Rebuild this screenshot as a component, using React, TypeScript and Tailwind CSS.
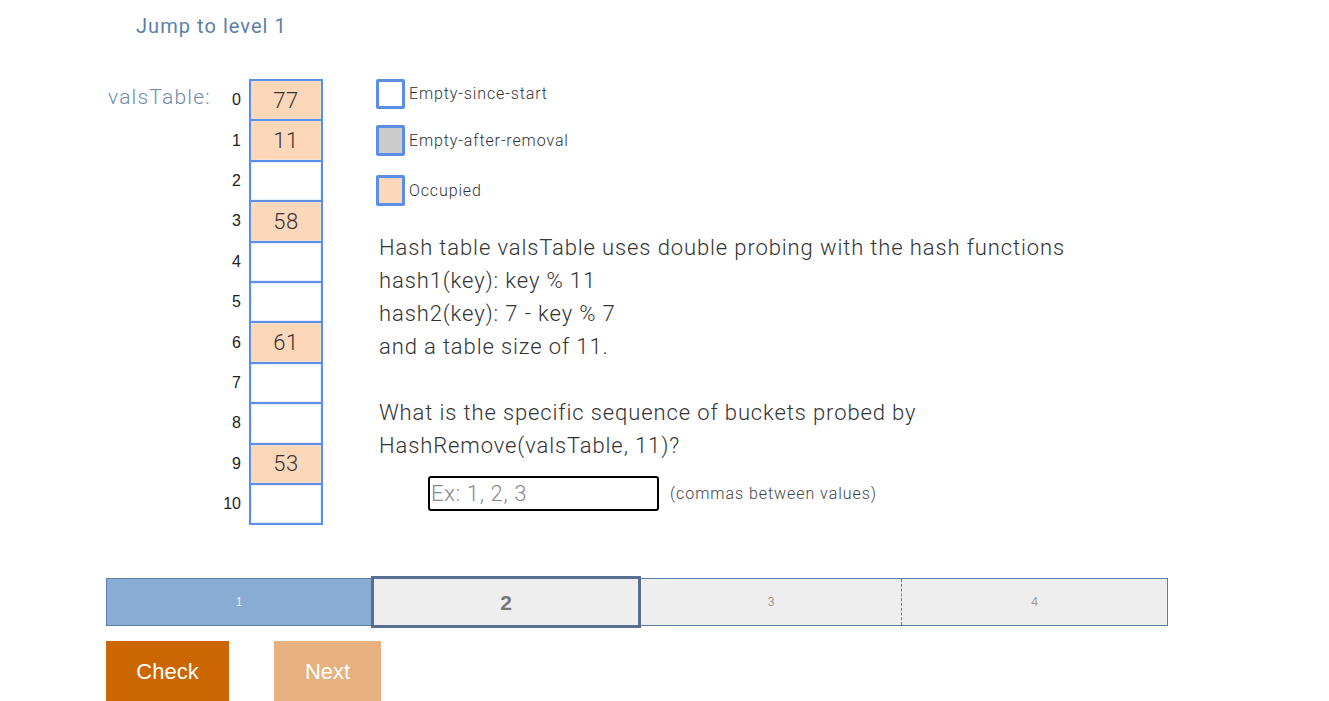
import React from "react";

const rows: (number | null)[] = [77, 11, null, 58, null, null, 61, null, null, 53, null];

export default function App() {
  return (
    <div className="min-h-[701px] bg-white pl-[106px] pt-[14px]" style={{ fontFamily: "Roboto, 'Liberation Sans', sans-serif" }}>
      <div className="ml-[30px] text-[20px] leading-[24px] tracking-[1.05px] text-[#5d7fa3]">Jump to level 1</div>

      <div className="mt-[41px] flex">
        {/* left: table */}
        <div className="flex">
          <div className="ml-[2px] w-[106px] pt-[6px] text-[21px] font-light leading-[24px] tracking-[1.2px] text-[#6f8aa8]">valsTable:</div>
          <div className="flex flex-col">
            {rows.map((v, i) => (
              <div key={i} className={"flex items-center " + (i > 0 ? "-mt-[2px]" : "")}>
                <div className="w-[28px] pr-[1px] text-right text-[16px] text-[#222]" style={{ fontFamily: "'Liberation Sans', Arial, sans-serif" }}>
                  {i}
                </div>
                <div className="ml-[7px] h-[42.4px] w-[74px] border-2 border-[#5b8ee6]">
                  <div
                    className={
                      "flex h-full w-full items-center justify-center border text-[22px] font-light tracking-[0.5px] text-[#333] " +
                      (v !== null ? "border-[#f0e0d0] bg-[#fdd7b9]" : "border-[#e8eefa] bg-white")
                    }
                  >
                    {v}
                  </div>
                </div>
              </div>
            ))}
          </div>
        </div>

        {/* right */}
        <div className="ml-[53px] flex flex-col">
          <div className="flex items-center">
            <div className="h-[30px] w-[29px] rounded-[2px] border-[3px] border-[#5b8ee6] bg-white" />
            <span className="ml-[4px] text-[16px] font-light tracking-[0.88px] text-[#333]">Empty-since-start</span>
          </div>
          <div className="mt-[16px] flex items-center">
            <div className="h-[31px] w-[29px] rounded-[2px] border-[3px] border-[#5b8ee6] bg-[#cccccc]" />
            <span className="ml-[4px] text-[16px] font-light tracking-[0.88px] text-[#333]">Empty-after-removal</span>
          </div>
          <div className="mt-[19px] flex items-center">
            <div className="h-[31px] w-[29px] rounded-[2px] border-[3px] border-[#5b8ee6] bg-[#fdd7b9]" />
            <span className="ml-[4px] text-[16px] font-light tracking-[0.88px] text-[#333]">Occupied</span>
          </div>

          <div className="ml-[3px] mt-[25px] text-[22px] font-light leading-[33px] tracking-[0.88px] text-[#333]">
            <div>Hash table valsTable uses double probing with the hash functions</div>
            <div>hash1(key): key % 11</div>
            <div>hash2(key): 7 - key % 7</div>
            <div>and a table size of 11.</div>
            <div className="h-[33px]" />
            <div>What is the specific sequence of buckets probed by</div>
            <div>HashRemove(valsTable, 11)?</div>
          </div>

          <div className="ml-[52px] mt-[14px] flex items-center">
            <input
              placeholder="Ex: 1, 2, 3"
              className="h-[35px] w-[231px] rounded-[3px] border-2 border-black px-[1px] text-[22px] font-light tracking-[0.65px] text-[#333] outline-none placeholder:text-[#888]"
              style={{ fontFamily: "Roboto, sans-serif" }}
            />
            <span className="ml-[11px] text-[16px] font-light tracking-[0.95px] text-[#444]">(commas between values)</span>
          </div>
        </div>
      </div>

      {/* progress */}
      <div className="mt-[53px] flex h-[48px] w-[1062px] border border-[#5a7ea6] bg-[#eeeeee]" style={{ fontFamily: "'Liberation Sans', Arial, sans-serif" }}>
        <div className="flex w-[264px] items-center justify-center bg-[#88acd3] text-[12px] text-[#e8eef6]">1</div>
        <div className="-my-[3px] flex w-[270px] items-center justify-center border-[3px] border-[#586f91] bg-[#eeeeee] text-[21px] font-bold text-[#777]">2</div>
        <div className="flex w-[261px] items-center justify-center border-r border-dashed border-[#5a7ea6] text-[12px] text-[#999]">3</div>
        <div className="flex flex-1 items-center justify-center text-[12px] text-[#999]">4</div>
      </div>

      <div className="mt-[15px] flex" style={{ fontFamily: "'Liberation Sans', Arial, sans-serif" }}>
        <button className="h-[60px] w-[123px] bg-[#cc6600] text-[22px] text-white">Check</button>
        <button className="ml-[45px] h-[60px] w-[107px] bg-[#e6b17e] text-[22px] text-white">Next</button>
      </div>
    </div>
  );
}
